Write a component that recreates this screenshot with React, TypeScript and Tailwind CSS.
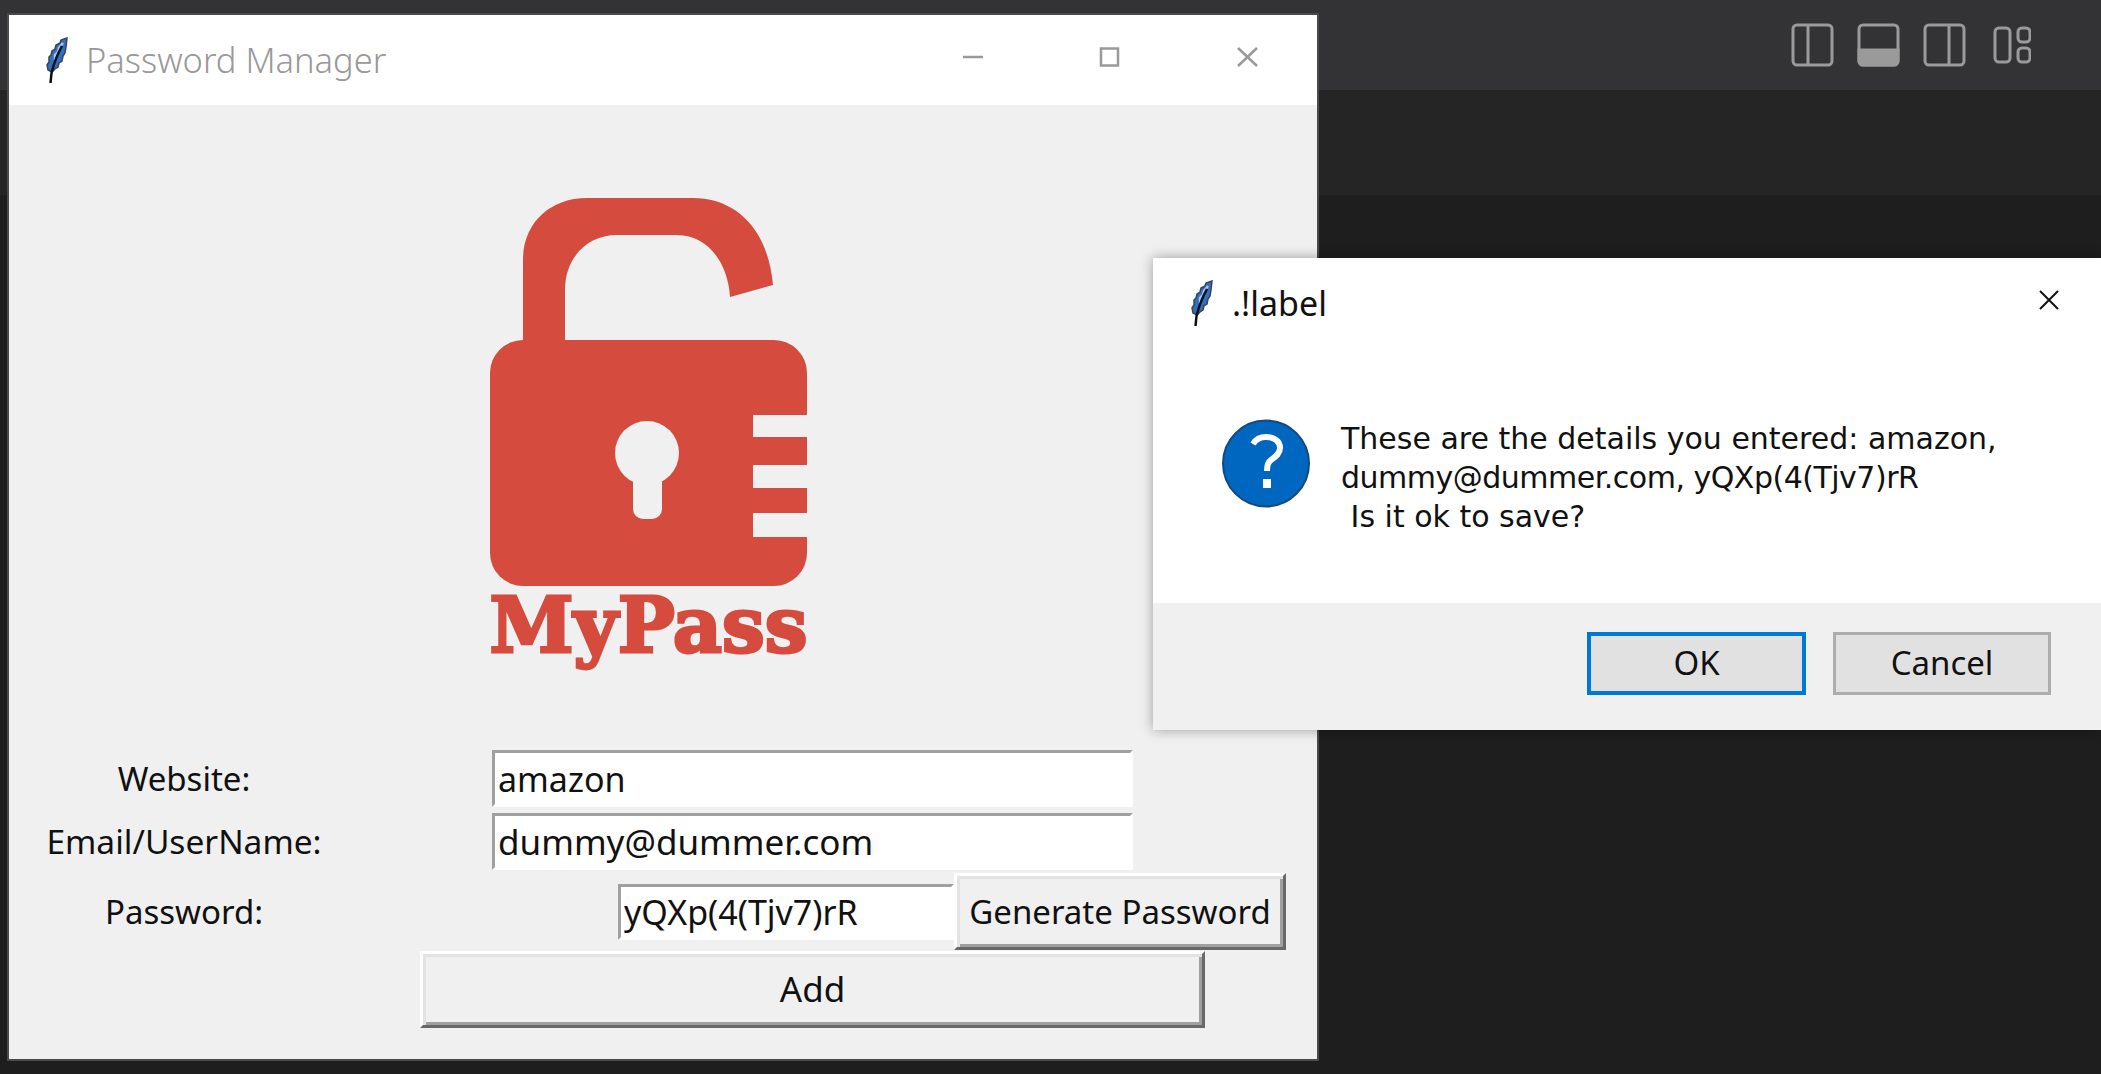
import React from 'react';

const Feather: React.FC<{ className?: string }> = ({ className = '' }) => (
  <svg className={className} viewBox="0 0 24 47" fill="none" xmlns="http://www.w3.org/2000/svg">
    <path d="M22 1L16 3L15 6L11 8L10 12L7 14L6 18L4 20L4 25L2 28L3 33L7 35L10 32L13 30L14 26L17 24L18 19L20 16L21 10Z" fill="#2f6fc4" stroke="#3c4450" strokeWidth="1.500" />
    <path d="M18 6L14 11L13 15L10 18L10 23" stroke="#a4c8ee" strokeWidth="2.500" />
    <path d="M17 9C13 16 9 26 6.500 36L5.500 46" stroke="#0c0f14" strokeWidth="2.500" />
  </svg>
);

const RaisedButton: React.FC<{ className?: string; children: React.ReactNode }> = ({ className = '', children }) => (
  <div className={`flex items-center justify-center bg-[#f0f0f0] border-[3px] border-t-white border-l-white border-r-[#696969] border-b-[#696969] shadow-[inset_3px_3px_0_#e3e3e3,inset_-3px_-3px_0_#a0a0a0] ${className}`}>
    {children}
  </div>
);

const Entry: React.FC<{ className?: string; value: string }> = ({ className = '', value }) => (
  <div className={`flex items-center bg-white border-[3px] border-t-[#a0a0a0] border-l-[#a0a0a0] border-r-white border-b-white pl-[3px] pt-[2px] ${className}`}>
    {value}
  </div>
);

const App: React.FC = () => {
  return (
    <div className="relative w-[2101px] h-[1074px] overflow-hidden bg-[#1e1e1e] font-['Noto_Sans',sans-serif] text-[33px] text-[#111]">
      {/* Editor chrome behind the windows */}
      <div className="flex flex-col">
        <div className="flex h-[90px] items-center justify-end bg-[#333336] pr-[70px]">
          <svg width="240" height="44" viewBox="0 0 240 44" fill="none" stroke="#9a9a9a" strokeWidth="3">
            <rect x="2" y="2" width="39" height="40" rx="4" />
            <path d="M17 2V42" />
            <rect x="68" y="2" width="39" height="40" rx="4" />
            <path d="M68 27H107V38a4 4 0 0 1-4 4H72a4 4 0 0 1-4-4Z" fill="#9a9a9a" />
            <rect x="134" y="2" width="39" height="40" rx="4" />
            <path d="M158 2V42" />
            <rect x="204" y="5" width="15" height="34" rx="4" />
            <rect x="227" y="5" width="12" height="14" rx="4" />
            <rect x="227" y="25" width="12" height="14" rx="4" />
          </svg>
        </div>
        <div className="h-[105px] bg-[#252526]" />
      </div>

      {/* Password Manager window */}
      <div className="absolute left-[7px] top-[13px] flex h-[1048px] w-[1312px] flex-col border-2 border-[#4a4a4a]">
        <div className="flex h-[90px] shrink-0 items-center bg-white pl-[36px]">
          <Feather className="h-[47px] w-[24px]" />
          <span className="ml-[17px] text-[34.500px] font-light text-[#999999]">Password Manager</span>
          <svg className="ml-auto mr-[59px] mt-[-6px]" width="295" height="20" viewBox="0 0 295 20" fill="none" stroke="#999999" strokeWidth="2.500">
            <path d="M0 10H20" />
            <rect x="138" y="1.500" width="17" height="17" />
            <path d="M275 1L294 19M294 1L275 19" />
          </svg>
        </div>

        <div className="flex flex-1 flex-col bg-[#f0f0f0]">
          <div className="ml-[481px] mt-[93px] flex w-[317px] flex-col">
            <svg width="317" height="388" viewBox="0 0 317 388" xmlns="http://www.w3.org/2000/svg">
              <path d="M33 150V62C33 25 60 0 97 0H203C245 0 278 30 283 87L240 99C238 65 218 37 187 37H127C97 37 75 60 75 92V150Z" fill="#d54b3e" />
              <rect x="0" y="142" width="317" height="246" rx="33" fill="#d54b3e" />
              <rect x="263" y="217" width="54" height="22" fill="#f0f0f0" />
              <rect x="263" y="267" width="54" height="23" fill="#f0f0f0" />
              <rect x="263" y="315" width="54" height="24" fill="#f0f0f0" />
              <circle cx="157" cy="255" r="32" fill="#f0f0f0" />
              <rect x="143" y="265" width="29" height="56" rx="10" fill="#f0f0f0" />
            </svg>
            <div className="mt-[-3px] flex h-[86px] items-center justify-center whitespace-nowrap font-['DejaVu_Serif',serif] text-[76px] font-bold text-[#d54b3e] [-webkit-text-stroke:3px_#d54b3e]">
              MyPass
            </div>
          </div>

          <div className="mt-[81px] flex h-[57px] items-center">
            <span className="w-[350px] text-center">Website:</span>
            <Entry className="ml-[133px] h-[57px] w-[641px] text-[34px]" value="amazon" />
          </div>
          <div className="mt-[6px] flex h-[57px] items-center">
            <span className="w-[350px] text-center text-[33.500px]">Email/UserName:</span>
            <Entry className="ml-[133px] h-[57px] w-[641px] text-[35px]" value="dummy@dummer.com" />
          </div>
          <div className="mt-[3px] flex h-[77px] items-center">
            <span className="w-[350px] text-center">Password:</span>
            <Entry className="ml-[259px] h-[56px] w-[336px] text-[34px]" value="yQXp(4(Tjv7)rR" />
            <RaisedButton className="h-[77px] w-[332px]">Generate Password</RaisedButton>
          </div>
          <RaisedButton className="ml-[411px] mt-[1px] h-[77px] w-[785px] text-[35px]">Add</RaisedButton>
        </div>
      </div>

      {/* Confirmation dialog */}
      <div className="absolute left-[1153px] right-0 top-[258px] flex h-[472px] flex-col bg-white shadow-[0_0_12px_rgba(0,0,0,0.35)]">
        <div className="flex h-[90px] shrink-0 items-center pl-[37px] pr-[42px]">
          <Feather className="h-[47px] w-[24px]" />
          <span className="ml-[18px] text-[34px] text-[#111]">.!label</span>
          <svg className="ml-auto mt-[-6px]" width="20" height="20" viewBox="0 0 20 20" fill="none" stroke="#111" strokeWidth="2">
            <path d="M1 1L19 19M19 1L1 19" />
          </svg>
        </div>
        <div className="flex flex-1 pl-[69px] pt-[71px]">
          <svg className="shrink-0" width="88" height="89" viewBox="0 0 88 89" xmlns="http://www.w3.org/2000/svg">
            <circle cx="44" cy="44.500" r="43" fill="#0067c0" stroke="#14497f" strokeWidth="2" />
            <path d="M31 25C34 20 39 18 44 18C52 18 58 22 58 29C58 35 53 38 49 41C46 43 45 46 45 52" fill="none" stroke="#fff" strokeWidth="6" />
            <rect x="41" y="60" width="8" height="9" fill="#fff" />
          </svg>
          <div className="ml-[31px] whitespace-pre font-['DejaVu_Sans',sans-serif] text-[30px] leading-[39px] text-[#111]">
            <div>These are the details you entered: amazon,</div>
            <div className="tracking-[-0.5px]">dummy@dummer.com, yQXp(4(Tjv7)rR</div>
            <div> Is it ok to save?</div>
          </div>
        </div>
        <div className="flex h-[127px] shrink-0 items-center justify-end gap-[27px] bg-[#f0f0f0] pb-[7px] pr-[50px]">
          <div className="flex h-[63px] w-[219px] items-center justify-center border-4 border-[#0078d7] bg-[#e1e1e1]">OK</div>
          <div className="flex h-[63px] w-[218px] items-center justify-center border-[3px] border-[#adadad] bg-[#e1e1e1]">Cancel</div>
        </div>
      </div>
    </div>
  );
};

export default App;
